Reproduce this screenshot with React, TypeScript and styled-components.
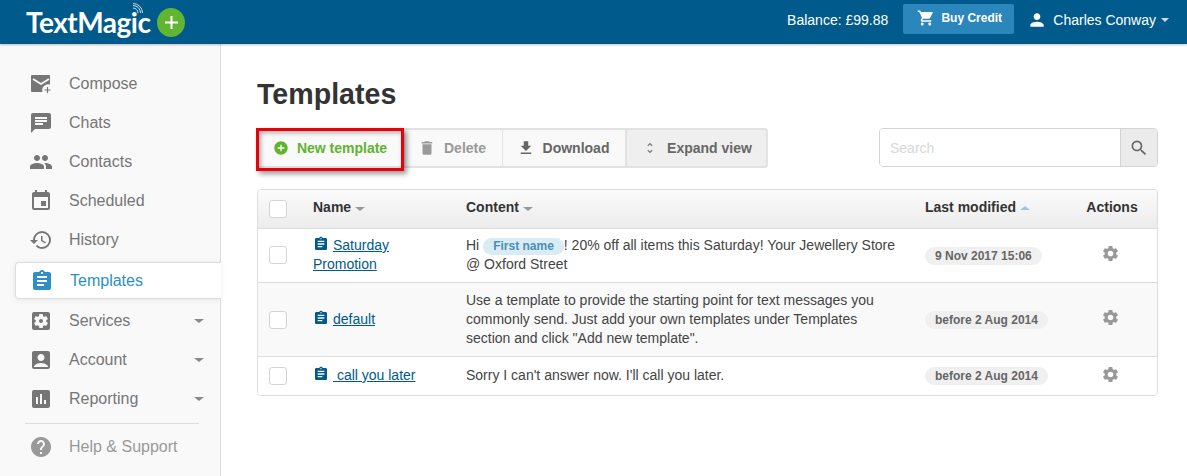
import React from "react"
import styled, { createGlobalStyle } from "styled-components"
import {
  MdAddCircle,
  MdAssessment,
  MdAccountBox,
  MdAssignment,
  MdChat,
  MdDelete,
  MdEvent,
  MdFileDownload,
  MdHelp,
  MdHistory,
  MdPeople,
  MdPerson,
  MdSearch,
  MdSettings,
  MdSettingsApplications,
  MdShoppingCart,
  MdUnfoldMore,
} from "react-icons/md"

const GlobalStyle = createGlobalStyle`
  html, body {
    margin: 0;
    padding: 0;
    background: #fff;
    font-family: "Liberation Sans", Arial, sans-serif;
    font-size: 14px;
    color: #333;
  }
`

const Page = styled.div`
  width: 1187px;
  height: 476px;
  display: flex;
  flex-direction: column;
  overflow: hidden;
`

const Header = styled.header`
  height: 44px;
  flex: none;
  background: #005a8c;
  box-shadow: 0 1px 2px rgba(0, 0, 0, 0.25);
  display: flex;
  align-items: center;
  padding: 0 18px 0 26px;
  color: #fff;
  position: relative;
  z-index: 2;
`

const Logo = styled.div`
  display: flex;
  align-items: center;
  position: relative;
  font-family: Lato, sans-serif;
  font-size: 28px;
  font-weight: 700;
  letter-spacing: -0.5px;
  line-height: 44px;
  color: #fff;
`

const Signal = styled.svg`
  position: absolute;
  left: 106px;
  top: 3px;
`

const PlusBadge = styled.span`
  width: 28px;
  height: 29px;
  margin-left: 7px;
  margin-top: 1px;
  border-radius: 50%;
  background: #62b433;
  display: flex;
  align-items: center;
  justify-content: center;
`

const HeaderRight = styled.div`
  margin-left: auto;
  margin-bottom: 6px;
  display: flex;
  align-items: center;
`

const Balance = styled.span`
  font-size: 14px;
  margin-right: 15px;
  padding-top: 2px;
`

const BuyButton = styled.button`
  height: 30px;
  width: 111px;
  border: 0;
  border-radius: 2px;
  background: #2b87bb;
  color: #fff;
  font: bold 12px "Liberation Sans", Arial, sans-serif;
  display: flex;
  align-items: center;
  justify-content: center;
  gap: 6px;
  padding: 0 0 2px 2px;
  margin-right: 13px;
`

const UserMenu = styled.div`
  display: flex;
  align-items: center;
  font-size: 14px;
  padding-top: 2px;
`

const UserIcon = styled(MdPerson)`
  margin-right: 6px;
`

const Caret = styled.span<{ $color?: string; $size?: number; $up?: boolean }>`
  display: inline-block;
  width: 0;
  height: 0;
  border-left: ${(p) => p.$size ?? 5}px solid transparent;
  border-right: ${(p) => p.$size ?? 5}px solid transparent;
  border-top: ${(p) => (p.$size ?? 5) - 1}px solid ${(p) => p.$color ?? "#ccdde8"};
  ${(p) => p.$up && "transform: rotate(180deg);"}
`

const UserCaret = styled(Caret)`
  margin-left: 5px;
  border-left-width: 4px;
  border-right-width: 4px;
  border-top-width: 4px;
`

const Body = styled.div`
  flex: 1;
  display: flex;
  min-height: 0;
`

const Sidebar = styled.nav`
  width: 220px;
  flex: none;
  background: #f9f9f9;
  border-right: 1px solid #ddd;
  padding-top: 20px;
  box-sizing: content-box;
`

const NavItem = styled.div<{ $active?: boolean; $muted?: boolean }>`
  height: ${(p) => (p.$active ? 37 : 39)}px;
  display: flex;
  align-items: center;
  box-sizing: border-box;
  font-size: 16px;
  color: ${(p) => (p.$active ? "#2e8fc4" : p.$muted ? "#999" : "#767676")};
  padding-left: ${(p) => (p.$active ? 14 : 29)}px;
  ${(p) =>
    p.$active &&
    `
    background: #fff;
    margin: 3px -1px 2px 15px;
    border: 1px solid #ddd;
    border-right: 0;
    border-radius: 4px 0 0 4px;
    box-shadow: 0 1px 6px rgba(0, 0, 0, 0.08);
    position: relative;
  `}
`

const NavIcon = styled.span`
  width: 24px;
  height: 24px;
  margin-right: 16px;
  display: flex;
  align-items: center;
  justify-content: center;
  flex: none;
`

const NavCaret = styled(Caret)`
  margin-left: auto;
  margin-right: 16px;
`

const NavDivider = styled.div`
  height: 1px;
  background: #ddd;
  margin: 5px 21px 3px 25px;
`

const Main = styled.main`
  flex: 1;
  padding: 32px 29px 0 36px;
  min-width: 0;
`

const Title = styled.h1`
  margin: 0 0 16px;
  font-size: 28.6px;
  line-height: 36px;
  font-weight: bold;
  color: #333;
`

const ToolRow = styled.div`
  display: flex;
  justify-content: space-between;
  align-items: flex-start;
  margin-bottom: 21px;
`

const ButtonGroup = styled.div`
  display: flex;
  position: relative;
  height: 40px;
`

const ToolButton = styled.button<{ $width: number; $pressed?: boolean; $tone?: string; $nudge?: number }>`
  width: ${(p) => p.$width}px;
  height: 40px;
  box-sizing: border-box;
  display: flex;
  align-items: center;
  justify-content: center;
  gap: 8px;
  padding: 0 ${(p) => p.$nudge ?? 0}px 0 0;
  font: bold 14px "Liberation Sans", Arial, sans-serif;
  color: ${(p) => p.$tone ?? "#666"};
  background: ${(p) => (p.$pressed ? "#efefef" : "#f9f9f9")};
  border: 2px solid #e2e2e2;
  border-left-width: ${(p) => (p.$pressed ? 2 : 1)}px;
  border-right-width: ${(p) => (p.$pressed ? 2 : 0)}px;
  ${(p) => p.$pressed && "border-radius: 0 4px 4px 0;"}
`

const ExpandIcon = styled(MdUnfoldMore)`
  margin: 0 2px;
`

const Highlight = styled.div`
  position: absolute;
  left: -1px;
  top: 0;
  width: 148px;
  height: 43px;
  box-sizing: border-box;
  border: 3px solid #e8000b;
  box-shadow: 3px 3px 5px rgba(0, 0, 0, 0.4), inset 2px 2px 4px rgba(0, 0, 0, 0.3);
  pointer-events: none;
`

const SearchBox = styled.div`
  width: 279px;
  height: 39px;
  box-sizing: border-box;
  display: flex;
  border: 1px solid #d4d4d4;
  border-radius: 4px;
  overflow: hidden;
`

const SearchInput = styled.input`
  flex: 1;
  min-width: 0;
  border: 0;
  padding: 0 10px;
  font: 14px "Liberation Sans", Arial, sans-serif;
  outline: none;
  &::placeholder {
    color: #d8d8d8;
  }
`

const SearchButton = styled.button`
  width: 37px;
  border: 0;
  border-left: 1px solid #d4d4d4;
  background: #ebebeb;
  padding: 0;
  display: flex;
  align-items: center;
  justify-content: center;
`

const Table = styled.div`
  border: 1px solid #ddd;
  border-radius: 4px;
  overflow: hidden;
`

const Row = styled.div<{ $height: number; $head?: boolean; $striped?: boolean; $lift?: number }>`
  display: grid;
  grid-template-columns: 55px 153px 459px 146px 82px;
  align-items: center;
  height: ${(p) => p.$height}px;
  box-sizing: border-box;
  padding-bottom: ${(p) => p.$lift ?? 0}px;
  line-height: 19px;
  font-weight: ${(p) => (p.$head ? "bold" : "normal")};
  color: ${(p) => (p.$head ? "#333" : "#444")};
  background: ${(p) =>
    p.$head ? "linear-gradient(#fbfbfb, #ececec)" : p.$striped ? "#f9f9f9" : "#fff"};
  & + & {
    border-top: 1px solid #ddd;
  }
`

const CheckCell = styled.div`
  display: flex;
  padding-left: 11px;
`

const Checkbox = styled.span`
  width: 18px;
  height: 18px;
  box-sizing: border-box;
  background: #fff;
  border: 1px solid #d4d4d4;
  border-radius: 3px;
`

const HeadCell = styled.div`
  display: flex;
  align-items: center;
  gap: 4px;
  margin-top: -3px;
`

const HeadCaret = styled(Caret)`
  margin-top: 3px;
`

const ActionsHead = styled.div`
  text-align: center;
  margin-top: -3px;
`

const NameCell = styled.div`
  padding-right: 20px;
`

const TemplateLink = styled.a`
  color: #005a8c;
  text-decoration: underline;
`

const LinkIcon = styled(MdAssignment)`
  vertical-align: -2px;
  margin-right: 4px;
`

const ContentCell = styled.div`
  padding-right: 20px;
`

const Tag = styled.span`
  display: inline-block;
  background: #d9ebf5;
  color: #4a90b8;
  font-size: 12px;
  font-weight: bold;
  line-height: 17px;
  padding: 0 10px;
  border-radius: 9px;
`

const DatePill = styled.span`
  display: inline-block;
  background: #f0f0f0;
  color: #666;
  font-size: 12px;
  font-weight: bold;
  line-height: 18px;
  padding: 0 10px;
  border-radius: 9px;
  white-space: nowrap;
`

const ActionCell = styled.div<{ $shift: number }>`
  display: flex;
  justify-content: center;
  padding-right: 4px;
  margin-top: ${(p) => p.$shift}px;
`

const ComposeIcon = () => (
  <svg width="22" height="20" viewBox="0 0 22 20">
    <path
      d="M2 1h17a1 1 0 0 1 1 1v8.5a6 6 0 0 0-7.5 7.5H2a1 1 0 0 1-1-1V2a1 1 0 0 1 1-1z"
      fill="#767676"
    />
    <path d="M3 5l8 5 8-5" fill="none" stroke="#f9f9f9" strokeWidth="1.8" />
    <path d="M17.5 13v6M14.5 16h6" stroke="#767676" strokeWidth="1.2" />
  </svg>
)

const navItems = [
  { label: "Compose", icon: <ComposeIcon /> },
  { label: "Chats", icon: <MdChat size={24} color="#767676" /> },
  { label: "Contacts", icon: <MdPeople size={24} color="#767676" /> },
  { label: "Scheduled", icon: <MdEvent size={24} color="#767676" /> },
  { label: "History", icon: <MdHistory size={24} color="#767676" /> },
  { label: "Templates", icon: <MdAssignment size={24} color="#2e8fc4" />, active: true },
  { label: "Services", icon: <MdSettingsApplications size={24} color="#767676" />, caret: true },
  { label: "Account", icon: <MdAccountBox size={24} color="#767676" />, caret: true },
  { label: "Reporting", icon: <MdAssessment size={24} color="#767676" />, caret: true },
]

const rows = [
  {
    height: 54,
    lift: 1,
    name: "Saturday Promotion",
    date: "9 Nov 2017 15:06",
    shift: -4,
    content: (
      <>
        Hi <Tag>First name</Tag>! 20% off all items this Saturday! Your Jewellery Store @ Oxford Street
      </>
    ),
  },
  {
    height: 74,
    name: "default",
    date: "before 2 Aug 2014",
    shift: -4,
    striped: true,
    content:
      'Use a template to provide the starting point for text messages you commonly send. Just add your own templates under Templates section and click "Add new template".',
  },
  {
    height: 39,
    lift: 1,
    name: "\u00a0call you later",
    date: "before 2 Aug 2014",
    shift: -3,
    content: "Sorry I can't answer now. I'll call you later.",
  },
]

export default function App() {
  return (
    <Page>
      <GlobalStyle />
      <Header>
        <Logo>
          TextMagic
          <Signal width="12" height="12" viewBox="0 0 12 12" fill="none" stroke="#cfe0ea" strokeWidth="1">
            <path d="M1 5a5 5 0 0 1 5 5" />
            <path d="M1 2.5a7.5 7.5 0 0 1 7.5 7.5" />
            <path d="M1 0.5a9.5 9.5 0 0 1 9.5 9.5" />
          </Signal>
          <PlusBadge>
            <svg width="13" height="13" viewBox="0 0 13 13">
              <path d="M6.5 0v13M0 6.5h13" stroke="#fff" strokeWidth="2" />
            </svg>
          </PlusBadge>
        </Logo>
        <HeaderRight>
          <Balance>Balance: £99.88</Balance>
          <BuyButton>
            <MdShoppingCart size={18} color="#fff" />
            Buy Credit
          </BuyButton>
          <UserMenu>
            <UserIcon size={20} color="#fff" />
            Charles Conway
            <UserCaret />
          </UserMenu>
        </HeaderRight>
      </Header>
      <Body>
        <Sidebar>
          {navItems.map((item) => (
            <NavItem key={item.label} $active={item.active}>
              <NavIcon>{item.icon}</NavIcon>
              {item.label}
              {item.caret && <NavCaret $color="#888" />}
            </NavItem>
          ))}
          <NavDivider />
          <NavItem $muted>
            <NavIcon>
              <MdHelp size={24} color="#999" />
            </NavIcon>
            Help &amp; Support
          </NavItem>
        </Sidebar>
        <Main>
          <Title>Templates</Title>
          <ToolRow>
            <ButtonGroup>
              <ToolButton $width={147} $tone="#5fb32e" $nudge={2}>
                <MdAddCircle size={16} color="#5fb32e" />
                New template
              </ToolButton>
              <ToolButton $width={98} $tone="#999" $nudge={3}>
                <MdDelete size={18} color="#999" />
                Delete
              </ToolButton>
              <ToolButton $width={123} $nudge={2}>
                <MdFileDownload size={18} color="#666" />
                Download
              </ToolButton>
              <ToolButton $width={143} $pressed>
                <ExpandIcon size={14} color="#777" />
                Expand view
              </ToolButton>
              <Highlight />
            </ButtonGroup>
            <SearchBox>
              <SearchInput placeholder="Search" />
              <SearchButton>
                <MdSearch size={20} color="#666" />
              </SearchButton>
            </SearchBox>
          </ToolRow>
          <Table>
            <Row $height={38} $head>
              <CheckCell>
                <Checkbox />
              </CheckCell>
              <HeadCell>
                Name <HeadCaret $color="#999" />
              </HeadCell>
              <HeadCell>
                Content <HeadCaret $color="#999" />
              </HeadCell>
              <HeadCell>
                Last modified <Caret $color="#9cc6df" $up />
              </HeadCell>
              <ActionsHead>Actions</ActionsHead>
            </Row>
            {rows.map((row) => (
              <Row key={row.name} $height={row.height} $striped={row.striped} $lift={row.lift}>
                <CheckCell>
                  <Checkbox />
                </CheckCell>
                <NameCell>
                  <LinkIcon size={16} color="#005a8c" />
                  <TemplateLink>{row.name}</TemplateLink>
                </NameCell>
                <ContentCell>{row.content}</ContentCell>
                <div>
                  <DatePill>{row.date}</DatePill>
                </div>
                <ActionCell $shift={row.shift}>
                  <MdSettings size={19} color="#999" />
                </ActionCell>
              </Row>
            ))}
          </Table>
        </Main>
      </Body>
    </Page>
  )
}
